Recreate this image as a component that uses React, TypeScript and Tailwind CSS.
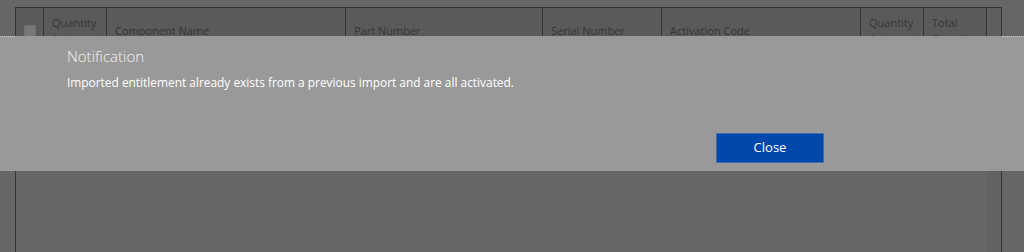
import React from "react";

const font = { fontFamily: '"Open Sans", "Noto Sans", "Liberation Sans", sans-serif' };

function HeaderCell({ w, children }: { w: string; children?: React.ReactNode }) {
  return (
    <div className={`${w} h-full flex items-center pl-2 pr-1 border-r border-[#333333] overflow-hidden`}>
      <div className="text-[11px] leading-[16px] text-[#363636] whitespace-nowrap">{children}</div>
    </div>
  );
}

export default function App() {
  return (
    <div className="relative w-[1024px] h-[252px] overflow-hidden bg-[#666666]" style={font}>
      <div className="pt-[7px] pl-[15px] h-full">
        <div className="w-[987px] h-full flex flex-col border-l border-r border-t border-[#333333]">
          <div className="h-[46px] flex bg-[#5a5a5a] border-b border-[#333333]">
            <div className="w-[28px] h-full flex items-center justify-center border-r border-[#333333]">
              <div className="w-[12px] h-[12px] bg-[#777777] border border-[#6e6e6e]" />
            </div>
            <HeaderCell w="w-[63px]">Quantity<br />Activated</HeaderCell>
            <HeaderCell w="w-[239px]">Component Name</HeaderCell>
            <HeaderCell w="w-[197px]">Part Number</HeaderCell>
            <HeaderCell w="w-[119px]">Serial Number</HeaderCell>
            <HeaderCell w="w-[199px]">Activation Code</HeaderCell>
            <HeaderCell w="w-[63px]">Quantity<br />Activated</HeaderCell>
            <HeaderCell w="w-[63px]">Total<br />Quantity</HeaderCell>
            <div className="flex-1 h-full bg-[#5f5f5f]" />
          </div>
          <div className="flex-1 flex">
            <div className="flex-1" />
            <div className="w-[14px] bg-[#626262]" />
          </div>
        </div>
      </div>

      <div className="absolute left-0 right-0 top-[36px] h-[135px] bg-[#999999] flex flex-col">
        <div className="absolute left-0 top-0 w-[15px] border-t border-dotted border-[#c8c8c8]" />
        <div className="absolute right-0 top-0 w-[22px] border-t border-dotted border-[#c8c8c8]" />
        <div className="pl-[67px] pt-[9px]">
          <div className="text-[15px] leading-[22px] font-light text-[#f4f4f4]">Notification</div>
          <div className="mt-[6px] text-[11.9px] leading-[18px] text-white">
            Imported entitlement already exists from a previous import and are all activated.
          </div>
        </div>
        <div className="flex justify-end pr-[200px] mt-[42px]">
          <button className="w-[108px] h-[30px] bg-[#0047ab] border border-[#3f6db3] text-white text-[13px] flex items-center justify-center">
            Close
          </button>
        </div>
      </div>
    </div>
  );
}
